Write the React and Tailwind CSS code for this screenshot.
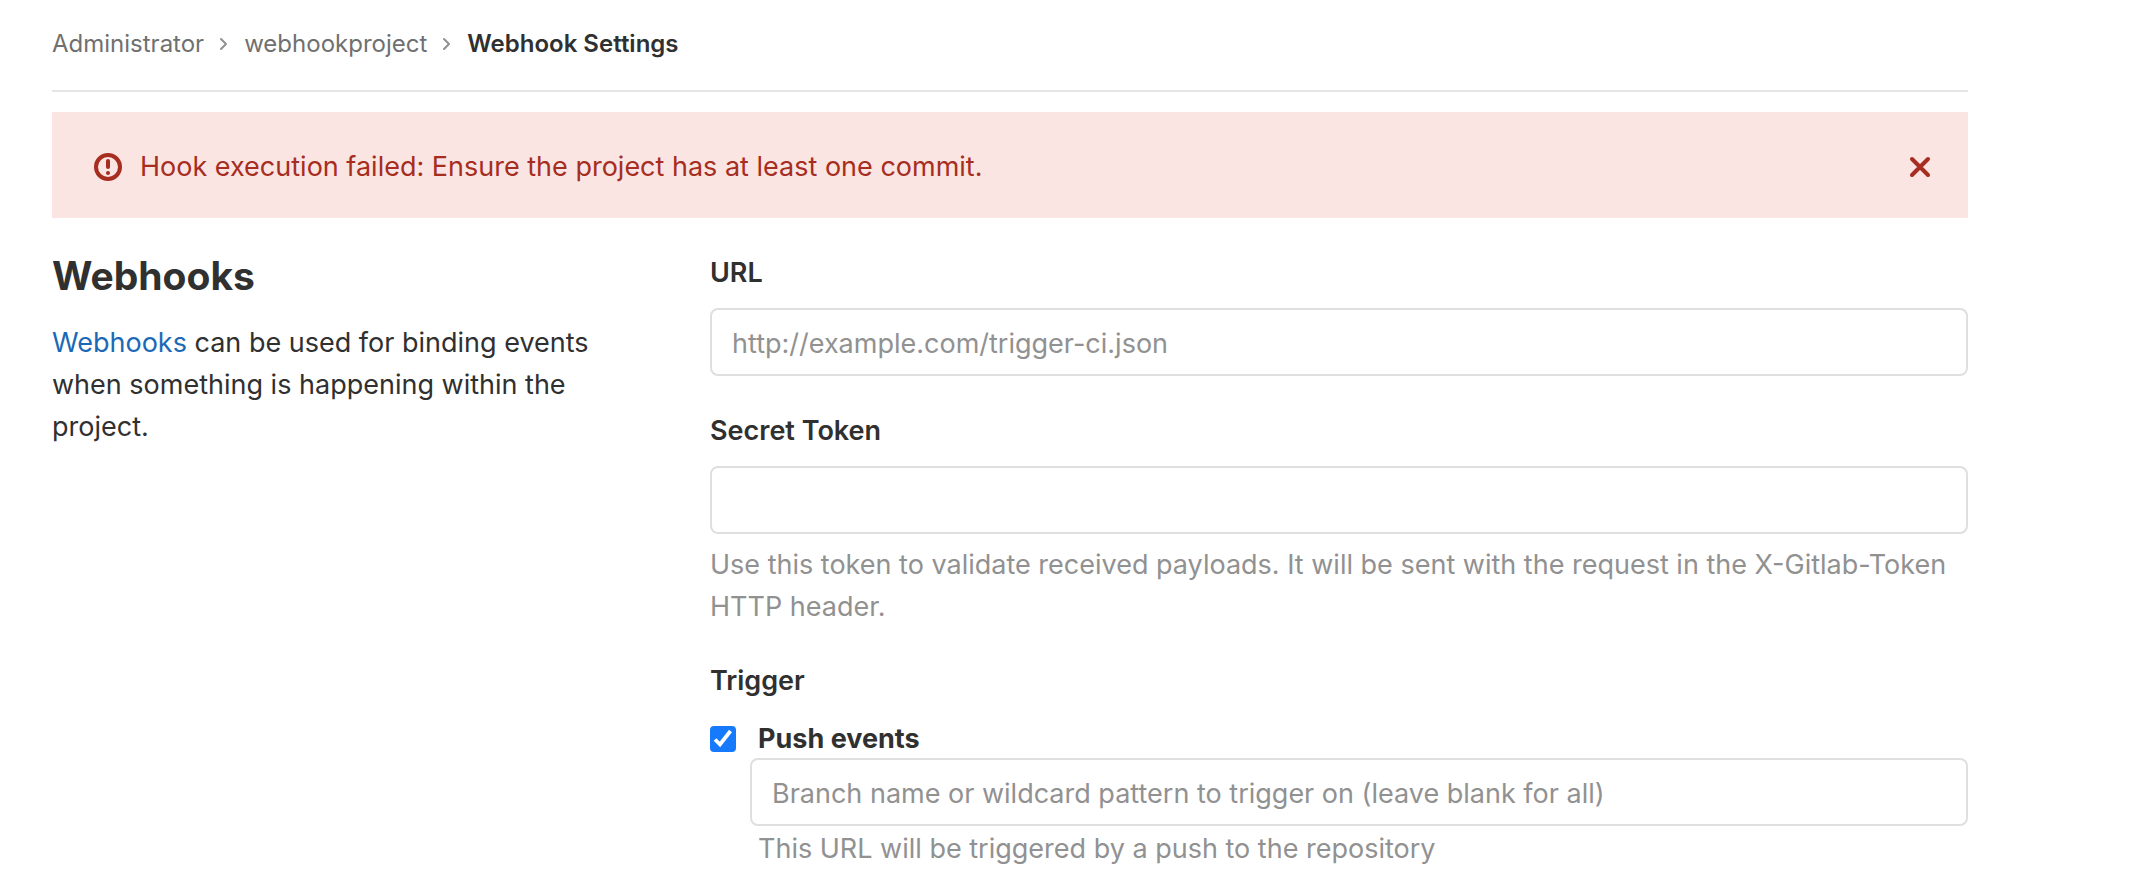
import { useState } from 'react';

const LABEL_CLASS = 'block mb-3.5 font-semibold';

const INPUT_CLASS =
  'block w-full h-[68px] rounded-lg border-2 border-[#dfdfdf] bg-white px-5 pt-0.5 text-[27px] text-[#303030] placeholder:text-[#919191] placeholder:opacity-100 focus:outline-none focus:border-[#80bdff]';

const ErrorIcon = () => (
  <svg viewBox="0 0 16 16" className="w-8 h-8 shrink-0" fill="none" aria-hidden="true">
    <circle cx="8" cy="8" r="6" stroke="currentColor" strokeWidth="2" />
    <path d="M8 5v3" stroke="currentColor" strokeWidth="2" strokeLinecap="round" />
    <circle cx="8" cy="11" r="1" fill="currentColor" />
  </svg>
);

const CloseIcon = () => (
  <svg viewBox="0 0 16 16" className="w-8 h-8" fill="none" aria-hidden="true">
    <path d="M4 4l8 8M12 4l-8 8" stroke="currentColor" strokeWidth="2" strokeLinecap="round" />
  </svg>
);

const BreadcrumbArrow = () => (
  <svg viewBox="0 0 16 16" className="w-4 h-4 shrink-0 text-[#919191]" fill="none" aria-hidden="true">
    <path d="M5 3l5 5-5 5" stroke="currentColor" strokeWidth="2" strokeLinecap="round" strokeLinejoin="round" />
  </svg>
);

const Breadcrumbs = () => (
  <nav aria-label="Breadcrumbs" className="flex items-center h-[92px] pb-0.5 border-b-2 border-[#e5e5e5] text-2xl text-[#707070]">
    <a href="#admin" className="hover:underline">Administrator</a>
    <span className="px-3"><BreadcrumbArrow /></span>
    <a href="#project" className="hover:underline">webhookproject</a>
    <span className="px-3"><BreadcrumbArrow /></span>
    <a href="#hooks" className="font-semibold text-[#303030]">Webhook Settings</a>
  </nav>
);

const Alert = ({ message, onClose }) => (
  <div role="alert" className="flex items-center mt-5 px-10 pt-[34px] pb-[30px] bg-[#fae5e2] text-[#a62d1f]">
    <ErrorIcon />
    <p className="grow ml-4">{message}</p>
    <button type="button" aria-label="Dismiss" onClick={onClose} className="-mr-2 cursor-pointer">
      <CloseIcon />
    </button>
  </div>
);

const App = () => {
  const [showAlert, setShowAlert] = useState(true);
  const [pushEvents, setPushEvents] = useState(true);
  const [form, setForm] = useState({ url: '', token: '', branch: '' });

  const handleChange = (e) => {
    setForm({ ...form, [e.target.name]: e.target.value });
  };

  return (
    <div className="min-h-screen bg-white pl-5 font-['Inter',sans-serif] text-[27px] leading-[42px] text-[#303030]">
      <main className="max-w-[1980px] px-8">
        <Breadcrumbs />
        {showAlert && (
          <Alert
            message="Hook execution failed: Ensure the project has at least one commit."
            onClose={() => setShowAlert(false)}
          />
        )}

        <div className="flex -mx-[29px] pt-[34px]">
          <section className="w-1/3 px-[29px]">
            <h1 className="text-[39px] leading-[48px] font-bold">Webhooks</h1>
            <p className="mt-[22px]">
              <a href="#webhooks" className="text-[#1b69b6] hover:underline">Webhooks</a> can be used for binding
              events when something is happening within the project.
            </p>
          </section>

          <form className="w-2/3 px-[29px]" onSubmit={(e) => e.preventDefault()}>
            <div>
              <label htmlFor="url" className={LABEL_CLASS}>URL</label>
              <input
                type="text"
                id="url"
                name="url"
                value={form.url}
                onChange={handleChange}
                placeholder="http://example.com/trigger-ci.json"
                className={INPUT_CLASS}
              />
            </div>

            <div className="mt-[34px]">
              <label htmlFor="token" className={LABEL_CLASS}>Secret Token</label>
              <input
                type="text"
                id="token"
                name="token"
                value={form.token}
                onChange={handleChange}
                className={INPUT_CLASS}
              />
              <p className="mt-2.5 text-[#919191]">
                Use this token to validate received payloads. It will be sent with the request in the X-Gitlab-Token
                HTTP header.
              </p>
            </div>

            <fieldset className="mt-8">
              <legend className="font-semibold mb-4">Trigger</legend>
              <div className="flex items-center -mb-0.5">
                <span className="relative flex">
                  <input
                    type="checkbox"
                    id="pushEvents"
                    checked={pushEvents}
                    onChange={(e) => setPushEvents(e.target.checked)}
                    className="peer appearance-none w-[26px] h-[26px] rounded border-2 border-[#919191] checked:border-[#157afb] checked:bg-[#157afb]"
                  />
                  <svg
                    viewBox="0 0 26 26"
                    className="absolute inset-0 w-full h-full text-white pointer-events-none invisible peer-checked:visible"
                    fill="none"
                    aria-hidden="true"
                  >
                    <path d="M5 13.500l5 5L20.500 5" stroke="currentColor" strokeWidth="3.800" />
                  </svg>
                </span>
                <label htmlFor="pushEvents" className="pl-[22px] font-bold">Push events</label>
              </div>
              <div className="pl-10">
                <input
                  type="text"
                  name="branch"
                  aria-label="Branch name or wildcard pattern"
                  value={form.branch}
                  onChange={handleChange}
                  placeholder="Branch name or wildcard pattern to trigger on (leave blank for all)"
                  className={INPUT_CLASS}
                />
                <p className="pl-2 mt-0.5 text-[#919191]">This URL will be triggered by a push to the repository</p>
              </div>
            </fieldset>
          </form>
        </div>
      </main>
    </div>
  );
};

export default App;
